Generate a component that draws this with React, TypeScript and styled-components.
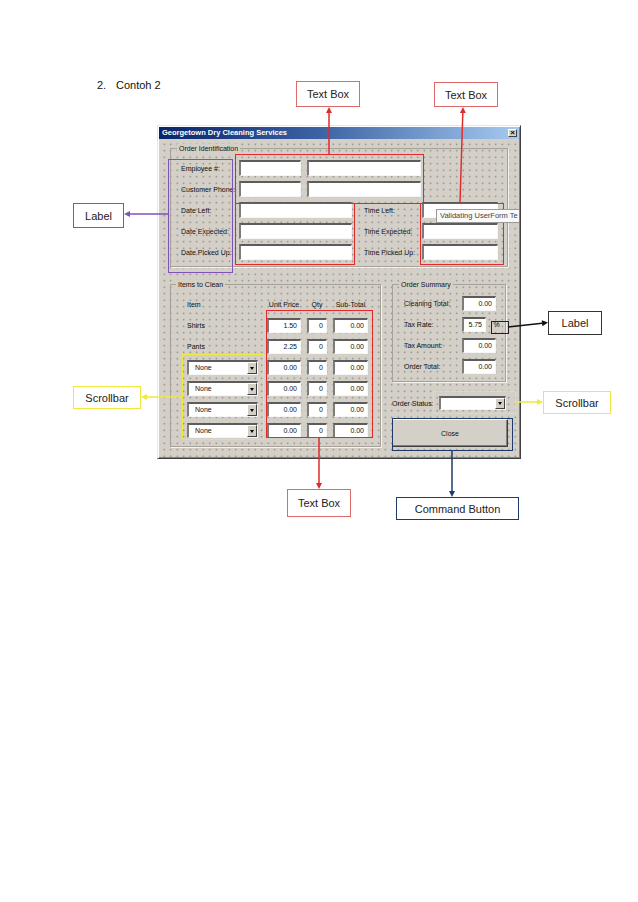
import React from 'react';
import styled, { createGlobalStyle } from 'styled-components';

const Global = createGlobalStyle`
  html, body { margin: 0; padding: 0; background: #fff; }
  body { font-family: "Liberation Sans", Arial, sans-serif; }
`;

const Page = styled.div`
  position: relative;
  width: 638px;
  height: 902px;
  padding-top: 78px;
  box-sizing: border-box;
  overflow: hidden;
`;

const Heading = styled.div`
  display: flex;
  padding-left: 97px;
  font-size: 11px;
  line-height: 14px;
  color: #111;
`;
const HeadNum = styled.span`
  width: 19px;
`;

const Window = styled.div`
  margin: 33px 0 0 157px;
  width: 364px;
  box-sizing: border-box;
  background: #d4d0c8;
  border: 1px solid;
  border-color: #e8e6e0 #404040 #404040 #e8e6e0;
  box-shadow: inset 1px 1px 0 #fff, inset -1px -1px 0 #808080;
  padding: 1px;
`;

const TitleBar = styled.div`
  height: 12px;
  display: flex;
  align-items: center;
  justify-content: space-between;
  padding: 0 2px 0 3px;
  background: linear-gradient(90deg, #0a246a 0%, #3c64a4 45%, #a6caf0 100%);
`;
const TitleText = styled.span`
  color: #fff;
  font-weight: bold;
  font-size: 7.5px;
  line-height: 12px;
  white-space: nowrap;
`;
const TitleClose = styled.span`
  width: 9px;
  height: 8px;
  box-sizing: border-box;
  background: #d4d0c8;
  border: 1px solid;
  border-color: #fff #404040 #404040 #fff;
  color: #000;
  font-weight: bold;
  font-size: 8px;
  line-height: 6px;
  text-align: center;
`;

const FormBody = styled.div`
  padding: 5px 11px 10px 11px;
  background-color: #d4d0c8;
  background-image: radial-gradient(circle, #7a7a7a 0.7px, transparent 1px);
  background-size: 6.5px 6.5px;
  background-position: 2px 2px;
  font-size: 7px;
  color: #111;
`;

const Frame = styled.fieldset<{ $w: number; $pl: number; $pt: number; $pb: number }>`
  margin: 0;
  min-inline-size: 0;
  width: ${p => p.$w}px;
  box-sizing: border-box;
  padding: ${p => p.$pt}px 0 ${p => p.$pb}px ${p => p.$pl}px;
  border: 1px solid #a6a29a;
  box-shadow: 1px 1px 0 #f4f2ee;
`;
const Legend = styled.legend<{ $ml: number }>`
  font-size: 7px;
  line-height: 9px;
  padding: 0 2px;
  margin-left: ${p => p.$ml}px;
  color: #111;
  background: #d4d0c8;
`;

const Rows = styled.div`
  display: flex;
  flex-direction: column;
  gap: 5px;
`;
const Row = styled.div<{ $h?: number }>`
  display: flex;
  align-items: center;
  height: ${p => p.$h ?? 16}px;
`;
const FieldLabel = styled.span<{ $w: number }>`
  width: ${p => p.$w}px;
  flex: none;
  white-space: nowrap;
  font-size: 7px;
`;
const TextBox = styled.div<{ $w: number; $h?: number; $ml?: number }>`
  width: ${p => p.$w}px;
  height: ${p => p.$h ?? 16}px;
  margin-left: ${p => p.$ml ?? 0}px;
  flex: none;
  box-sizing: border-box;
  background: #fff;
  border-style: solid;
  border-width: 2px 1px 1px 2px;
  border-color: #5c5c5c #f6f6f6 #f6f6f6 #7c7c7c;
  font-size: 7px;
  text-align: right;
  padding-right: 3px;
  line-height: ${p => (p.$h ?? 16) - 3}px;
`;
const Spacer = styled.span<{ $w: number }>`
  width: ${p => p.$w}px;
  flex: none;
`;

const Lower = styled.div`
  display: flex;
  align-items: flex-start;
  margin-top: 13px;
  gap: 11px;
`;

const ItemsGrid = styled.div`
  display: grid;
  grid-template-columns: 74px 34px 20px 35px;
  grid-auto-rows: 15px;
  column-gap: 6px;
  row-gap: 6px;
  align-items: center;
`;
const HeadCell = styled.span<{ $center?: boolean }>`
  text-align: ${p => (p.$center ? 'center' : 'left')};
  white-space: nowrap;
`;
const ItemName = styled.span``;
const Cell = styled.div`
  height: 15px;
  box-sizing: border-box;
  background: #fff;
  border-style: solid;
  border-width: 2px 1px 1px 2px;
  border-color: #5c5c5c #f6f6f6 #f6f6f6 #7c7c7c;
  font-size: 7px;
  text-align: right;
  padding-right: 3px;
  line-height: 12px;
`;

const Combo = styled.div<{ $w: number; $h?: number }>`
  width: ${p => p.$w}px;
  height: ${p => p.$h ?? 15}px;
  box-sizing: border-box;
  background: #fff;
  border-style: solid;
  border-width: 2px 1px 1px 2px;
  border-color: #5c5c5c #f6f6f6 #f6f6f6 #7c7c7c;
  display: flex;
  align-items: stretch;
  justify-content: space-between;
  flex: none;
`;
const ComboText = styled.span`
  padding-left: 6px;
  font-size: 7px;
  line-height: 12px;
`;
const ComboBtn = styled.span`
  width: 10px;
  box-sizing: border-box;
  background: #d4d0c8;
  border: 1px solid;
  border-color: #fff #404040 #404040 #fff;
  display: flex;
  align-items: center;
  justify-content: center;
  &::after {
    content: '';
    border-left: 2.5px solid transparent;
    border-right: 2.5px solid transparent;
    border-top: 3px solid #000;
  }
`;

const RightCol = styled.div`
  display: flex;
  flex-direction: column;
  align-items: flex-start;
`;
const SumRows = styled.div`
  display: flex;
  flex-direction: column;
  gap: 6px;
`;
const Percent = styled.span`
  width: 15px;
  margin-left: 3px;
  font-size: 7px;
  text-align: center;
  flex: none;
`;
const StatusRow = styled.div`
  display: flex;
  align-items: center;
  margin-top: 14px;
  height: 14px;
`;
const CloseBtn = styled.div`
  margin-top: 9px;
  width: 116px;
  height: 28px;
  box-sizing: border-box;
  background: #d4d0c8;
  border: 1px solid;
  border-color: #fff #404040 #404040 #fff;
  box-shadow: inset -1px -1px 0 #808080;
  display: flex;
  align-items: center;
  justify-content: center;
  font-size: 7px;
`;

/* ---------- annotations (overlay) ---------- */
const Callout = styled.div<{ $x: number; $y: number; $w: number; $h: number; $c: string }>`
  position: absolute;
  left: ${p => p.$x}px;
  top: ${p => p.$y}px;
  width: ${p => p.$w}px;
  height: ${p => p.$h}px;
  box-sizing: border-box;
  border: 1.5px solid ${p => p.$c};
  background: #fff;
  display: flex;
  align-items: center;
  justify-content: center;
  font-size: 11px;
  color: #222;
  white-space: nowrap;
`;
const Mark = styled.div<{ $x: number; $y: number; $w: number; $h: number; $c: string }>`
  position: absolute;
  left: ${p => p.$x}px;
  top: ${p => p.$y}px;
  width: ${p => p.$w}px;
  height: ${p => p.$h}px;
  box-sizing: border-box;
  border: 1.5px solid ${p => p.$c};
  pointer-events: none;
`;
const Tooltip = styled.div`
  position: absolute;
  left: 436px;
  top: 209px;
  height: 14px;
  box-sizing: border-box;
  background: #fafafa;
  border: 1px solid #9a9a9a;
  border-right: none;
  font-size: 7.5px;
  line-height: 12px;
  color: #444;
  padding: 0 1px 0 3px;
  white-space: nowrap;
`;
const Overlay = styled.svg`
  position: absolute;
  left: 0;
  top: 0;
  pointer-events: none;
`;

const RED = '#e22a2a';
const SOFTRED = '#e06a6a';
const PURPLE = '#8152b8';
const YELLOW = '#efe83e';
const NAVY = '#1f3a68';

type Arrow = { x1: number; y1: number; x2: number; y2: number; c: string };
const arrows: Arrow[] = [
  { x1: 329, y1: 154, x2: 329, y2: 107, c: RED },
  { x1: 460, y1: 203, x2: 463, y2: 107, c: RED },
  { x1: 168, y1: 214, x2: 124, y2: 214, c: PURPLE },
  { x1: 182, y1: 397, x2: 141, y2: 397, c: YELLOW },
  { x1: 508, y1: 327, x2: 548, y2: 322.5, c: '#111' },
  { x1: 515, y1: 402, x2: 543, y2: 402, c: YELLOW },
  { x1: 319, y1: 437, x2: 319, y2: 489, c: RED },
  { x1: 452, y1: 450, x2: 452, y2: 497, c: NAVY },
];

function ArrowLine({ a }: { a: Arrow }) {
  const dx = a.x2 - a.x1;
  const dy = a.y2 - a.y1;
  const len = Math.hypot(dx, dy);
  const ux = dx / len;
  const uy = dy / len;
  const hl = 6;
  const hw = 3;
  const bx = a.x2 - ux * hl;
  const by = a.y2 - uy * hl;
  const pts = `${a.x2},${a.y2} ${bx - uy * hw},${by + ux * hw} ${bx + uy * hw},${by - ux * hw}`;
  return (
    <g>
      <line x1={a.x1} y1={a.y1} x2={bx} y2={by} stroke={a.c} strokeWidth={1.5} />
      <polygon points={pts} fill={a.c} />
    </g>
  );
}

const itemRows = [
  { name: 'Shirts', price: '1.50' },
  { name: 'Pants', price: '2.25' },
  { combo: true, price: '0.00' },
  { combo: true, price: '0.00' },
  { combo: true, price: '0.00' },
  { combo: true, price: '0.00' },
];

export default function App() {
  return (
    <>
      <Global />
      <Page>
        <Heading>
          <HeadNum>2.</HeadNum>
          <span>Contoh 2</span>
        </Heading>

        <Window>
          <TitleBar>
            <TitleText>Georgetown Dry Cleaning Services</TitleText>
            <TitleClose>×</TitleClose>
          </TitleBar>
          <FormBody>
            <Frame $w={338} $pl={10} $pt={7} $pb={6}>
              <Legend $ml={-4}>Order Identification</Legend>
              <Rows>
                <Row>
                  <FieldLabel $w={58}>Employee #:</FieldLabel>
                  <TextBox $w={62} />
                  <TextBox $w={114} $ml={6} />
                </Row>
                <Row>
                  <FieldLabel $w={58}>Customer Phone:</FieldLabel>
                  <TextBox $w={62} />
                  <TextBox $w={114} $ml={6} />
                </Row>
                <Row>
                  <FieldLabel $w={58}>Date Left:</FieldLabel>
                  <TextBox $w={113} />
                  <Spacer $w={12} />
                  <FieldLabel $w={58}>Time Left:</FieldLabel>
                  <TextBox $w={76} />
                </Row>
                <Row>
                  <FieldLabel $w={58}>Date Expected:</FieldLabel>
                  <TextBox $w={113} />
                  <Spacer $w={12} />
                  <FieldLabel $w={58}>Time Expected:</FieldLabel>
                  <TextBox $w={76} />
                </Row>
                <Row>
                  <FieldLabel $w={58}>Date Picked Up:</FieldLabel>
                  <TextBox $w={113} />
                  <Spacer $w={12} />
                  <FieldLabel $w={58}>Time Picked Up:</FieldLabel>
                  <TextBox $w={76} />
                </Row>
              </Rows>
            </Frame>

            <Lower>
              <Frame $w={213} $pl={16} $pt={8} $pb={8}>
                <Legend $ml={-11}>Items to Clean</Legend>
                <ItemsGrid>
                  <HeadCell>Item</HeadCell>
                  <HeadCell $center>Unit Price</HeadCell>
                  <HeadCell $center>Qty</HeadCell>
                  <HeadCell $center>Sub-Total</HeadCell>
                  {itemRows.map((r, i) => (
                    <React.Fragment key={i}>
                      {r.combo ? (
                        <Combo $w={71}>
                          <ComboText>None</ComboText>
                          <ComboBtn />
                        </Combo>
                      ) : (
                        <ItemName>{r.name}</ItemName>
                      )}
                      <Cell>{r.price}</Cell>
                      <Cell>0</Cell>
                      <Cell>0.00</Cell>
                    </React.Fragment>
                  ))}
                </ItemsGrid>
              </Frame>

              <RightCol>
                <Frame $w={114} $pl={11} $pt={7} $pb={7}>
                  <Legend $ml={-5}>Order Summary</Legend>
                  <SumRows>
                    <Row $h={15}>
                      <FieldLabel $w={58}>Cleaning Total:</FieldLabel>
                      <TextBox $w={34} $h={15}>0.00</TextBox>
                    </Row>
                    <Row $h={15}>
                      <FieldLabel $w={58}>Tax Rate:</FieldLabel>
                      <TextBox $w={24} $h={15}>5.75</TextBox>
                      <Percent>%</Percent>
                    </Row>
                    <Row $h={15}>
                      <FieldLabel $w={58}>Tax Amount:</FieldLabel>
                      <TextBox $w={34} $h={15}>0.00</TextBox>
                    </Row>
                    <Row $h={15}>
                      <FieldLabel $w={58}>Order Total:</FieldLabel>
                      <TextBox $w={34} $h={15}>0.00</TextBox>
                    </Row>
                  </SumRows>
                </Frame>
                <StatusRow>
                  <FieldLabel $w={47}>Order Status:</FieldLabel>
                  <Combo $w={67} $h={14}>
                    <ComboText />
                    <ComboBtn />
                  </Combo>
                </StatusRow>
                <CloseBtn>Close</CloseBtn>
              </RightCol>
            </Lower>
          </FormBody>
        </Window>

        {/* highlight marks over the form */}
        <Mark $x={235} $y={154} $w={189} $h={50} $c={RED} />
        <Mark $x={235} $y={203} $w={120} $h={62} $c={RED} />
        <Mark $x={420} $y={203} $w={84} $h={62} $c={RED} />
        <Mark $x={168} $y={159} $w={65} $h={114} $c={PURPLE} />
        <Mark $x={266} $y={310} $w={107} $h={128} $c={RED} />
        <Mark $x={182} $y={354} $w={82} $h={86} $c={YELLOW} />
        <Mark $x={433} $y={391} $w={83} $h={23} $c={YELLOW} />
        <Mark $x={392} $y={418} $w={121} $h={33} $c={NAVY} />
        <Mark $x={491} $y={321} $w={18} $h={13} $c="#222" />

        <Tooltip>Validating UserForm Te</Tooltip>

        <Overlay width={638} height={902} viewBox="0 0 638 902">
          {arrows.map((a, i) => (
            <ArrowLine key={i} a={a} />
          ))}
        </Overlay>

        {/* callouts */}
        <Callout $x={296} $y={81} $w={64} $h={26} $c={SOFTRED}>Text Box</Callout>
        <Callout $x={434} $y={82} $w={64} $h={25} $c={SOFTRED}>Text Box</Callout>
        <Callout $x={73} $y={203} $w={51} $h={25} $c={PURPLE}>Label</Callout>
        <Callout $x={73} $y={386} $w={68} $h={23} $c={YELLOW}>Scrollbar</Callout>
        <Callout $x={548} $y={311} $w={54} $h={24} $c="#333">Label</Callout>
        <Callout $x={543} $y={391} $w={68} $h={23} $c={YELLOW}>Scrollbar</Callout>
        <Callout $x={287} $y={489} $w={64} $h={28} $c={SOFTRED}>Text Box</Callout>
        <Callout $x={396} $y={497} $w={123} $h={23} $c={NAVY}>Command Button</Callout>
      </Page>
    </>
  );
}
